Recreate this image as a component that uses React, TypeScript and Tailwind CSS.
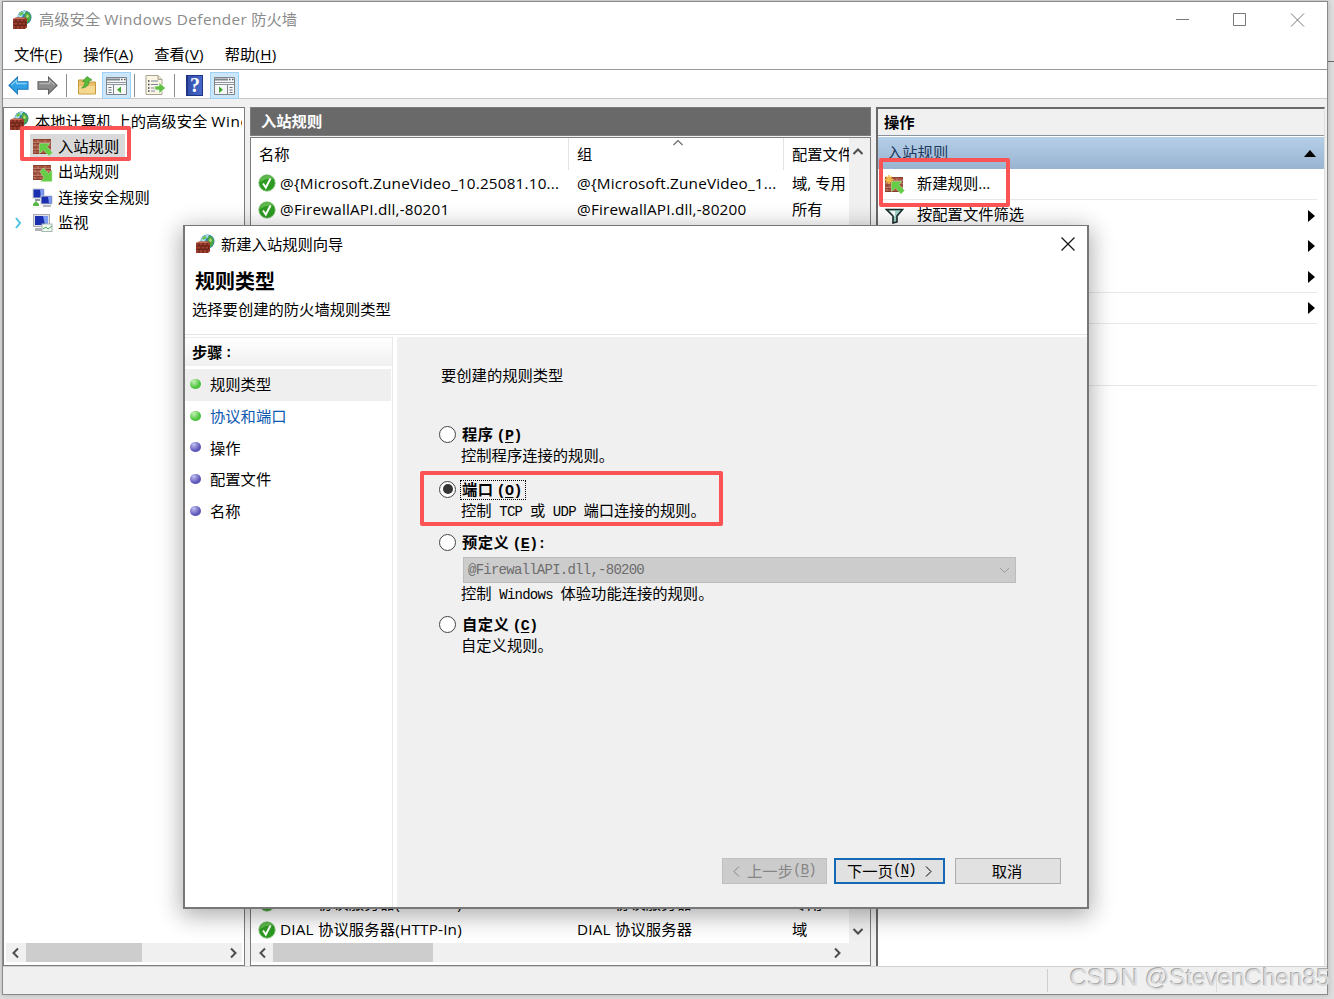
import type { ReactNode } from "react";

const UI = "font-['Open_Sans','Noto_Sans_CJK_SC',sans-serif]";
const SONG = "font-['Noto_Sans_CJK_SC',sans-serif]";

const steps = [
    { label: "规则类型", done: true, active: true },
    { label: "协议和端口", done: true, link: true },
    { label: "操作" },
    { label: "配置文件" },
    { label: "名称" },
];

// Half width latin run inside the wizard texts
const Mono = ({ children }: { children: ReactNode }) => (
    <span className="font-['Liberation_Mono',monospace] text-[14px] tracking-[-0.75px] whitespace-pre">{children}</span>
);

const Key = ({ k, wide }: { k: string; wide?: boolean }) => (
    <span className={wide ? "ml-[3px] font-['Liberation_Mono',monospace] text-[15px] tracking-[-0.6px]" : "font-['Liberation_Mono',monospace] text-[14px] tracking-[-0.75px]"}>
        (<span className="underline underline-offset-2">{k}</span>)
    </span>
);

const FirewallIcon = () => (
    <svg width="20" height="20" viewBox="0 0 20 20" className="shrink-0">
        <circle cx="12.500" cy="7.500" r="7" fill="#2b79bd" />
        <path d="M6 6C7 2 11 .5 14 1l-1 2.500-2 1-1 3-3 1z" fill="#a9e6ee" />
        <path d="M14 1.500c3 .5 5 3 5 5.500l-1 4-3 2.500-2-2 1-3-2-2 1-3z" fill="#4aa63e" />
        <path d="M15 4l2 2-1 2-2-1z" fill="#b4dd7a" />
        <path d="M7 4l2-2 3 .5-1 2-3 1.500z" fill="#6cc05a" />
        <path d="M1 9l3-1.500h9.500L15 9v8.500l-2 1.500H1z" fill="#9d3f2c" />
        <path d="M1 9l3-1.500h9.500L12 9z" fill="#c9705a" />
        <path d="M1 12h14M1 15.200h14M4 9v3M8 9v3M12 9v3M6 12v3M10 12v3M13.500 12v3M4 15v4M8 15v4M12 15v4" stroke="#5a1c14" strokeWidth=".9" />
    </svg>
);

const RuleIcon = ({ out, star }: { out?: boolean; star?: boolean }) => (
    <svg width="21" height="19" viewBox="0 0 21 19" className="shrink-0">
        <rect x="1" y="2" width="18" height="15" fill="#a4543f" />
        <path d="M1 5.500h18M1 9h18M1 12.500h18M6 2v3.500M13 2v3.500M3 5.500v3.500M9 5.500v3.500M16 5.500v3.500M6 9v3.500M13 9v3.500M3 12.500v3.500M9 12.500v3.500" stroke="#c98d7b" strokeWidth=".8" />
        <path d="M1 2.500h18M1 6.400h18M1 9.900h18M1 13.400h18M1 16.500h18" stroke="#7a3325" strokeWidth=".7" />
        {out
            ? <path d="M8 8.500L11.500 5l5 5.500L20 7v11.500H8.500l3.500-3.500z" fill="#64cc45" stroke="#b7e6a6" strokeWidth=".6" />
            : <path d="M7.500 6.500H18l-3 3 5.500 6-3.500 3.500-5.500-6-4 3.500z" fill="#64cc45" stroke="#b7e6a6" strokeWidth=".6" />}
        {star && <path d="M5 0v9M.5 4.500h9M2 1.500l6 6M8 1.500l-6 6" stroke="#f3bd45" strokeWidth="1.500" />}
    </svg>
);

const ComputersIcon = () => (
    <svg width="21" height="20" viewBox="0 0 21 20" className="shrink-0">
        <rect x="1" y="1" width="11" height="9" fill="#1a30b0" stroke="#c8cbd2" />
        <path d="M8 1.500h3.500v8H9z" fill="#7b9cf2" />
        <path d="M3 12h5" stroke="#8f949d" strokeWidth="2" />
        <rect x="9" y="8" width="11" height="8" fill="#1a30b0" stroke="#c8cbd2" />
        <path d="M16 8.500h3.500v7H17z" fill="#7b9cf2" />
        <path d="M11 18h8" stroke="#b5b9c0" strokeWidth="2" />
        <path d="M1 16l3-3 3 3v2H1z" fill="#58b947" />
    </svg>
);

const MonitorIcon = () => (
    <svg width="21" height="20" viewBox="0 0 21 20" className="shrink-0">
        <rect x="1.500" y="1.500" width="16" height="12" fill="#e0e1e4" stroke="#a9abb0" />
        <rect x="3" y="3" width="13" height="9" fill="#1a2fb0" />
        <path d="M11 3h5v9h-3z" fill="#7b9cf2" />
        <path d="M3 16.500h7" stroke="#b1b3b8" strokeWidth="3" />
        <rect x="10" y="11" width="10" height="7.500" fill="#f2fbf3" stroke="#a7b7b0" />
        <path d="M11 16l3-2 2 2 4-3" stroke="#49a95a" fill="none" />
    </svg>
);

const CheckIcon = () => (
    <svg width="18" height="18" viewBox="0 0 18 18" className="shrink-0">
        <circle cx="9" cy="9" r="8.200" fill="#2c9b21" stroke="#8ac481" strokeWidth=".8" />
        <path d="M2 8a7 7 0 0 1 13-3C11 4 6 5 2 8z" fill="#76c763" opacity=".7" />
        <path d="M5 9.500l2.800 4L12.500 4.500" fill="none" stroke="#fff" strokeWidth="2" />
    </svg>
);

const FilterIcon = () => (
    <svg width="19" height="16" viewBox="0 0 19 16" className="shrink-0">
        <path d="M1.500 1.500h16L12 8v6l-4 1V8z" fill="#9fd6c8" stroke="#1a2b2b" strokeWidth="1.600" />
        <path d="M5 3h5v6z" fill="#fff" />
    </svg>
);

const ArrowIcon = ({ gray }: { gray?: boolean }) => (
    <svg width="21" height="19" viewBox="0 0 22 18" preserveAspectRatio="none" className={gray ? "shrink-0 -scale-x-100" : "shrink-0"}>
        <path d="M1 9l9-8v4.500h11v7H10V17z" fill={gray ? "#8b8b8b" : "#2f9fe3"} stroke={gray ? "#5c5c5c" : "#1b78bd"} />
        <path d="M3.500 8.500L9 4v3h10.500" fill="none" stroke={gray ? "#b5b5b5" : "#85d2f7"} strokeWidth="1.400" />
    </svg>
);

const FolderIcon = () => (
    <svg width="20" height="20" viewBox="0 0 20 20" className="block">
        <path d="M1.500 5h6l2 2H18.500v12H1.500z" fill="#e8c069" stroke="#c4963c" />
        <path d="M2 11h16v7.500H2z" fill="#f5d88f" />
        <path d="M4.500 13c2.500-1.500 3.500-3.500 3.500-6.500H5.500L10 1.500l5 3.500-3 .8c.5 3.700-2.500 7.200-7.500 7.200z" fill="#59bb3d" stroke="#35932a" strokeWidth=".7" />
    </svg>
);

const PaneIcon = ({ right }: { right?: boolean }) => (
    <svg width="21" height="18" viewBox="0 0 21 18">
        <path d="M.5.500h20v17H.500z" fill="#f7f7f7" stroke="#7e858c" />
        <path d="M1 2.500h13" stroke="#7e858c" strokeWidth="2" />
        <path d="M15 2.500h1.500M18 2.500h1.500" stroke="#555" strokeWidth="1.500" />
        <path d="M1 5.500h19M1 7.500h19" stroke="#8f979e" />
        {right
            ? <><path d="M13.500 8v9" stroke="#7e858c" /><path d="M15.500 10.500h3M15.500 13h3M15.500 15.500h3" stroke="#66717c" /><path d="M5 9.500l4 3.200-4 3.200z" fill="#42a82f" /></>
            : <><path d="M7.500 8v9" stroke="#7e858c" /><path d="M2.500 10.500h3M2.500 13h3M2.500 15.500h3" stroke="#66717c" /><path d="M15 9.500l-4 3.200 4 3.200z" fill="#42a82f" /></>}
    </svg>
);

const ExportIcon = () => (
    <svg width="21" height="20" viewBox="0 0 21 20" className="block">
        <path d="M1 .500h12l4 4V19.500H1z" fill="#fbf6e3" stroke="#aaa392" />
        <path d="M13 .500v4h4" fill="#e6dfc8" stroke="#aaa392" />
        <path d="M6 6h7M6 9.500h7M6 13h6M6 16h4" stroke="#7b87a0" />
        <path d="M3 6h1.500M3 9.500h1.500M3 13h1.500M3 16h1.500" stroke="#33405e" strokeWidth="1.400" />
        <path d="M10 11h4V7.500l6.500 5.500-6.500 5.500V15h-4z" fill="#5fc044" stroke="#fff" strokeWidth=".6" />
    </svg>
);

const HelpIcon = () => (
    <div className="flex h-[21px] w-[17px] items-center justify-center border border-[#1f3483] border-l-2 bg-linear-to-r from-[#3550ac] to-[#4668cb] font-['Liberation_Serif',serif] text-[20px] leading-none font-bold text-white">?</div>
);

const Chevron = ({ d, thin }: { d: string; thin?: boolean }) => (
    <svg width="12" height="12" viewBox="0 0 12 12" className="shrink-0">
        <path d={d} fill="none" stroke={thin ? "#666" : "#4d4d4d"} strokeWidth={thin ? 1.1 : 2} />
    </svg>
);
const LEFT = "M8 1.500L3.500 6L8 10.500";
const RIGHT = "M4 1.500L8.500 6L4 10.500";
const UP = "M1.500 8L6 3.500L10.500 8";
const DOWN = "M1.500 4L6 8.500L10.500 4";

const TitleBar = () => (
    <div className="flex h-[36px] items-center pl-[9px] text-[15.3px] text-[#8b8b8b]">
        <FirewallIcon />
        <span className="mt-[-1px] ml-[7px] whitespace-pre">高级安全 <span className="tracking-[0.44px]">Windows Defender</span> 防火墙</span>
        <svg width="132" height="16" viewBox="0 0 132 16" className="mr-[20px] ml-auto" fill="none" stroke="#777" strokeWidth="1">
            <path d="M1 7.500h13M58.500 1.500h12v12h-12zM116 1.500l13 13M129 1.500l-13 13" />
        </svg>
    </div>
);

const MenuBar = () => (
    <div className="flex h-[31px] items-center gap-[20.8px] pt-px pl-[11px] text-[15.3px] whitespace-nowrap">
        {[["文件", "F"], ["操作", "A"], ["查看", "V"], ["帮助", "H"]].map(([t, k]) => (
            <span key={k}>{t}<span className="tracking-[0.3px]">(<span className="underline underline-offset-2">{k}</span>)</span></span>
        ))}
    </div>
);

const ToolBar = () => (
    <div className="flex h-[30px] items-center border-t border-b border-t-[#999] border-b-[#c9c9c9] pt-[2px] pl-[5px]">
        <ArrowIcon />
        <div className="ml-[8px]"><ArrowIcon gray /></div>
        <div className="ml-[8px] h-[23px] w-px bg-[#8d8d8d]" />
        <div className="ml-[10px]"><FolderIcon /></div>
        <div className="ml-[5px] flex h-[27px] w-[29px] items-center justify-center border border-[#9fd0f5] bg-[#cce6fa] pt-px"><PaneIcon /></div>
        <div className="ml-[3px] h-[23px] w-px bg-[#8d8d8d]" />
        <div className="ml-[10px]"><ExportIcon /></div>
        <div className="ml-[8px] h-[23px] w-px bg-[#8d8d8d]" />
        <div className="ml-[11px]"><HelpIcon /></div>
        <div className="ml-[7px] flex h-[27px] w-[29px] items-center justify-center border border-[#9fd0f5] bg-[#cce6fa] pt-px"><PaneIcon right /></div>
    </div>
);

const Tree = () => (
    <div className="flex w-[242px] flex-col overflow-hidden border border-[#7c7c7c] bg-white text-[15.3px]">
        <div className="mr-[2px] flex h-[26px] items-center overflow-hidden pl-[5px] whitespace-nowrap">
            <FirewallIcon /><span className="ml-[6px] whitespace-pre">本地计算机 上的高级安全 <span className="tracking-[0.6px]">Wind</span></span>
        </div>
        <div className="ml-[26px] flex h-[25px] w-[95px] items-center bg-[#d9d9d9] pl-[2px]">
            <RuleIcon /><span className="mt-[-1px] ml-[5px]">入站规则</span>
        </div>
        <div className="flex h-[26px] items-center pl-[28px]"><RuleIcon out /><span className="mt-[-2px] ml-[5px]">出站规则</span></div>
        <div className="flex h-[25px] items-center pl-[28px]"><ComputersIcon /><span className="mt-[-1px] ml-[5px]">连接安全规则</span></div>
        <div className="flex h-[26px] items-center pl-[8px]">
            <svg width="12" height="12" viewBox="0 0 12 12"><path d="M4 1l4 5-4 5" fill="none" stroke="#4cc2e4" strokeWidth="2" /></svg>
            <div className="ml-[8px]"><MonitorIcon /></div><span className="mt-[-1px] ml-[5px]">监视</span>
        </div>
        <div className="mx-[2px] mt-auto mb-[3px] flex h-[19px] items-center bg-[#f0f0f0] pr-[3px] pl-[4px]">
            <Chevron d={LEFT} />
            <div className="ml-[4px] h-full w-[116px] bg-[#cdcdcd]" />
            <div className="ml-auto"><Chevron d={RIGHT} /></div>
        </div>
    </div>
);

const Row = ({ name, group, profile }: { name: string; group: string; profile: string }) => (
    <div className="flex h-[26.5px] shrink-0 items-center whitespace-nowrap">
        <div className="flex w-[326px] items-center pl-[7px]"><CheckIcon /><span className="ml-[4px] tracking-[0.18px]">{name}</span></div>
        <span className="w-[215px] tracking-[0.18px]">{group}</span>
        <span>{profile}</span>
    </div>
);

const RuleList = () => (
    <div className="ml-[5px] flex w-[621px] flex-col text-[15.3px]">
        <div className="mb-px flex h-[29px] items-center border border-[#7c7c7c] bg-[#696969] pl-[10px] font-bold text-white">入站规则</div>
        <div className="flex min-h-0 flex-1 flex-col border border-[#7c7c7c] bg-white">
            <div className="flex min-h-0 flex-1">
                <div className="flex w-[598px] flex-col overflow-hidden">
                    <div className="flex h-[32px] shrink-0 items-center whitespace-nowrap">
                        <div className="flex h-full w-[318px] shrink-0 items-center border-r border-[#e3e3e3] pl-[8px]">名称</div>
                        <div className="relative flex h-full w-[215px] shrink-0 items-center border-r border-[#e3e3e3] pl-[8px]">
                            组
                            <div className="absolute top-[-1px] left-[103px]"><Chevron d={UP} thin /></div>
                        </div>
                        <span className="pl-[8px]">配置文件</span>
                    </div>
                    <Row name="@{Microsoft.ZuneVideo_10.25081.10..." group="@{Microsoft.ZuneVideo_1..." profile="域, 专用" />
                    <Row name="@FirewallAPI.dll,-80201" group="@FirewallAPI.dll,-80200" profile="所有" />
                    <div className="flex-1" />
                    <Row name="DIAL 协议服务器(HTTP-In)" group="DIAL 协议服务器" profile="专用" />
                    <Row name="DIAL 协议服务器(HTTP-In)" group="DIAL 协议服务器" profile="域" />
                </div>
                <div className="flex w-[21px] flex-col items-center justify-between bg-[#f0f0f0] pt-[8px] pr-[3px] pb-[6px]">
                    <Chevron d={UP} /><Chevron d={DOWN} />
                </div>
            </div>
            <div className="mb-[3px] flex h-[19px] items-center bg-[#f0f0f0] pl-[6px]">
                <Chevron d={LEFT} />
                <div className="ml-[4px] h-full w-[160px] bg-[#cdcdcd]" />
                <div className="mr-[27px] ml-auto"><Chevron d={RIGHT} /></div>
            </div>
        </div>
    </div>
);

const Triangle = () => (
    <svg width="7" height="12" viewBox="0 0 7 12" className="mr-[9px] ml-auto"><path d="M0 0l7 6-7 6z" fill="#000" /></svg>
);

const Actions = () => (
    <div className="ml-[5px] flex w-[449px] flex-col border-t-2 border-r border-l-2 border-t-[#696969] border-r-[#dedede] border-l-[#696969] bg-white text-[15.3px]">
        <div className="flex h-[27px] items-center border-b border-[#8b949d] bg-[#f0f0f0] pl-[6px] font-bold">操作</div>
        <div className="mt-px flex h-[32px] items-center bg-linear-to-b from-[#b5cfe8] to-[#99b4d1] pl-[9px] text-[#1e395b]">
            <span className="mt-[-2px]">入站规则</span>
            <svg width="12" height="7" viewBox="0 0 12 7" className="mr-[8px] ml-auto"><path d="M0 7l6-7 6 7z" fill="#000" /></svg>
        </div>
        <div className="mr-[7px] ml-[5px] flex h-[31px] items-center border-b border-[#e8e8e8]">
            <div className="ml-px"><RuleIcon star /></div><span className="mt-[-2px] ml-[12px]">新建规则...</span>
        </div>
        <div className="flex h-[31px] items-center pl-[7px]"><FilterIcon /><span className="mt-[-2px] ml-[13px]">按配置文件筛选</span><Triangle /></div>
        <div className="flex h-[30px] items-center"><Triangle /></div>
        <div className="flex h-[31px] items-center"><Triangle /></div>
        <div className="mr-[7px] ml-[5px] flex h-[32px] items-center border-t border-b border-[#e8e8e8]">
            <div className="mr-[-7px] ml-auto"><Triangle /></div>
        </div>
        <div className="mr-[7px] ml-[5px] h-[62px] border-b border-[#e8e8e8]" />
    </div>
);

const StatusBar = () => (
    <div className="flex h-[28px] border-t border-[#d0d0d0] bg-[#f0f0f0]">
        <div className="my-[2px] ml-[1044px] w-px bg-[#cfcfcf]" />
        <div className="my-[2px] ml-[168px] w-px bg-[#dcdcdc]" />
    </div>
);

const Option = ({ title, k, colon, checked, children }: { title: string; k: string; colon?: boolean; checked?: boolean; children: ReactNode }) => (
    <div className="flex">
        <div className="mt-[1px] flex h-[17px] w-[17px] shrink-0 items-center justify-center rounded-full border-[1.5px] border-[#444] bg-white">
            {checked && <div className="h-[10px] w-[10px] rounded-full bg-[#333]" />}
        </div>
        <div className="ml-[4px]">
            <div className={`flex h-[20px] w-fit items-center pr-[4px] pl-[2px] font-bold ${checked ? "outline-1 outline-dotted outline-black -outline-offset-1" : ""}`}>
                <span className="tracking-[0.5px]">{title}<Key k={k} wide />{colon && <Mono>:</Mono>}</span>
            </div>
            <div className="mt-[-1px] pl-[1px]">{children}</div>
        </div>
    </div>
);

const Wizard = () => (
    <div className={`absolute top-[225px] left-[183px] flex h-[684px] w-[906px] flex-col border-2 border-t-[1.5px] border-[#777] bg-white text-[15.3px] leading-[20px] text-black shadow-[0_5px_22px_2px_rgba(0,0,0,0.32)] ${SONG}`}>
        <div className="flex h-[36px] shrink-0 items-center pl-[10px]">
            <FirewallIcon />
            <span className="mt-[-2px] ml-[6px]">新建入站规则向导</span>
            <svg width="14" height="14" viewBox="0 0 14 14" className="mr-[12px] ml-auto"><path d="M.5.500l13 13M13.500.500l-13 13" stroke="#111" strokeWidth="1.200" /></svg>
        </div>
        <div className="h-[73px] shrink-0 border-b border-[#e4e4e4]">
            <h1 className="mt-[6px] pl-[10px] text-[20px] leading-[26px] font-bold">规则类型</h1>
            <p className="mt-[4px] pl-[7px]">选择要创建的防火墙规则类型</p>
        </div>
        <div className="mt-[2px] flex min-h-0 flex-1">
            <div className="w-[208px] shrink-0 border-r border-[#e8e8e8]">
                <div className="flex h-[29px] items-center border-t border-[#ececec] bg-linear-to-b from-white to-[#f0f0f0] pb-[2px] pl-[7px] font-bold">步骤<span className="ml-[2px]"><Mono>:</Mono></span></div>
                <div className="mt-[3px] flex flex-col">
                    {steps.map((s) => (
                        <div key={s.label} className={`mr-[1px] flex h-[31.7px] items-center pl-[5px] ${s.active ? "bg-[#efefef]" : ""}`}>
                            <div className={`mt-[-2px] h-[10px] w-[11px] rounded-full ${s.done ? "bg-radial-[at_35%_25%] from-[#c6f3b5] to-[#4cc23f] to-60%" : "bg-radial-[at_35%_25%] from-[#c0c0f0] to-[#5f58bb] to-60%"}`} />
                            <span className={`mt-[-3px] ml-[9px] ${s.link ? "text-[#0c59b0]" : ""}`}>{s.label}</span>
                        </div>
                    ))}
                </div>
            </div>
            <div className="ml-[4px] flex flex-1 flex-col bg-[#f0f0f0]">
                <p className="mt-[27px] pl-[44px]">要创建的规则类型</p>
                <div className="mt-[41px] pl-[42px]">
                    <div className="h-[54.500px]"><Option title="程序" k="P">控制程序连接的规则。</Option></div>
                    <div className="h-[53.500px]"><Option title="端口" k="O" checked>控制<Mono> TCP </Mono>或<Mono> UDP </Mono>端口连接的规则。</Option></div>
                    <div className="h-[82px]">
                        <Option title="预定义" k="E" colon>
                            <div className="mt-[5px] mb-[-1px] ml-[2px] flex h-[26px] w-[553px] items-center border border-[#bcbcbc] bg-[#cccccc] pr-[5px] pl-[4px] text-[#6d6d6d]">
                                <Mono>@FirewallAPI.dll,-80200</Mono>
                                <svg width="11" height="7" viewBox="0 0 11 7" className="ml-auto"><path d="M1 1l4.500 4.500L10 1" fill="none" stroke="#999" /></svg>
                            </div>
                            控制<Mono> Windows </Mono>体验功能连接的规则。
                        </Option>
                    </div>
                    <Option title="自定义" k="C">自定义规则。</Option>
                </div>
                <div className="mt-auto mr-[26px] mb-[23px] flex items-center justify-end">
                    <div className="mr-[7px] flex h-[26px] w-[105px] items-center justify-center border border-[#bfbfbf] bg-[#cccccc] pb-[2px] text-[#858585]">
                        <svg width="7" height="11" viewBox="0 0 7 11" className="mt-[2px] mr-[7px]"><path d="M6 .500l-5 5 5 5" fill="none" stroke="#858585" /></svg>
                        上一步<Key k="B" />
                    </div>
                    <div className="mr-[10px] flex h-[26px] w-[111px] items-center justify-center border-2 border-[#1468b5] bg-[#e1e1e1] pb-[2px]">
                        下一页<Key k="N" />
                        <svg width="7" height="11" viewBox="0 0 7 11" className="mt-[2px] ml-[9px]"><path d="M1 .500l5 5-5 5" fill="none" stroke="#000" /></svg>
                    </div>
                    <div className="flex h-[26px] w-[106px] items-center justify-center border border-[#adadad] bg-[#e1e1e1] pr-[2px] pb-[2px]">取消</div>
                </div>
            </div>
        </div>
    </div>
);

const App = () => {
    return (
        <div className={`relative h-[999px] w-[1334px] overflow-hidden bg-[#dedede] pt-px pl-[2px] text-black ${UI}`}>
            <div className="flex h-[994px] w-[1326px] flex-col border border-[#8a8a8a] bg-white shadow-[0_0_6px_rgba(0,0,0,0.2)]">
                <TitleBar />
                <MenuBar />
                <ToolBar />
                <div className="flex min-h-0 flex-1 bg-[#f0f0f0] pt-[8px]">
                    <Tree />
                    <RuleList />
                    <Actions />
                </div>
                <StatusBar />
            </div>
            <div className="absolute top-[61px] left-[1328px] h-px w-[6px] bg-[#666]" />

            <Wizard />

            <div className="absolute top-[126px] left-[20px] h-[35px] w-[111px] rounded-xs border-4 border-[#fb5353]" />
            <div className="absolute top-[158px] left-[879px] h-[49px] w-[131px] rounded-xs border-4 border-[#fb5353]" />
            <div className="absolute top-[471px] left-[420px] h-[55px] w-[303px] rounded-xs border-4 border-[#fb5353]" />
            <div className="absolute top-[963px] left-[1070px] font-['Liberation_Sans',sans-serif] text-[24.2px] leading-[30px] whitespace-nowrap text-[#dcdcdc] [text-shadow:-1px_-1px_0_#a8a8a8]">CSDN @StevenChen85</div>
        </div>
    );
};

export default App;
